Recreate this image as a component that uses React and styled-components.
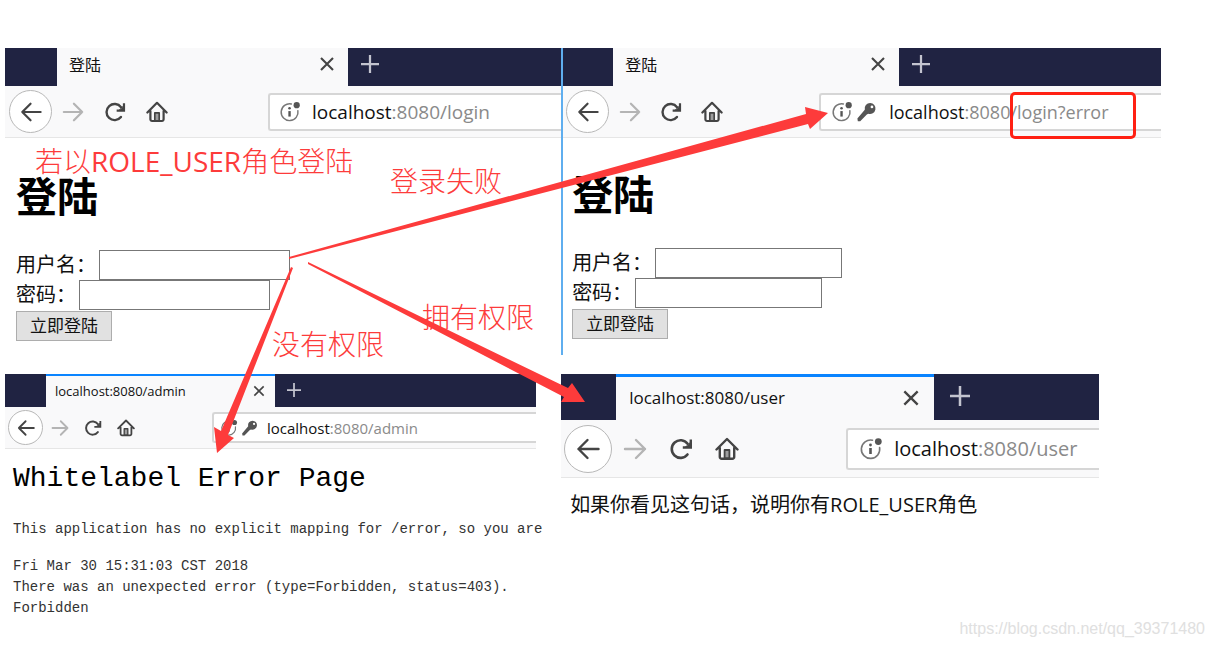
import React from 'react';
import styled, { createGlobalStyle, css } from 'styled-components';

const GlobalStyle = createGlobalStyle`
  * {
    box-sizing: border-box;
  }

  body {
    margin: 0;
    background: #fff;
    color: #111;
    font-family: "Open Sans", "Noto Sans CJK SC", sans-serif;
  }

  button, input {
    font-family: inherit;
    margin: 0;
  }
`;

// sizes for each browser window: s = small, m and n = normal, l = large
const sizes = {
  s: { bar: 33, block: 41, tab: 229, title: 13, pad: 9, lift: 1, tabIcon: 14, line: 2, nav: 42, inset: 3, back: 35, icon: 18, step: 33, space: 70, url: 31, font: 15, info: 18, urlPad: 6 },
  m: { bar: 38, block: 52, tab: 291, title: 16, pad: 12, lift: 7, tabIcon: 18, line: 0, nav: 52, inset: 4, back: 43, icon: 22, step: 42, space: 90, url: 38, font: 19, info: 22, urlPad: 9 },
  n: { bar: 38, block: 50, tab: 286, title: 16, pad: 12, lift: 6, tabIcon: 18, line: 0, nav: 52, inset: 3, back: 43, icon: 22, step: 41, space: 87, url: 38, font: 18, info: 22, urlPad: 10 },
  l: { bar: 46, block: 55, tab: 318, title: 17, pad: 13, lift: 2, tabIcon: 20, line: 3, nav: 58, inset: 3, back: 48, icon: 24, step: 46, space: 96, url: 42, font: 20, info: 24, urlPad: 11 },
};

const Page = styled.main`
  position: relative;
  min-height: 100vh;
  padding: 48px 0 0 5px;
  overflow: hidden;
`;

const Board = styled.div`
  display: grid;
  grid-template-columns: 46fr 54fr;
  grid-template-rows: 326px auto;
`;

const Cell = styled.div`
  min-width: 0;
  padding-right: ${({ $right }) => $right || 0}px;
`;

const Window = styled.section`
  ${({ $edge }) => $edge && css`
    height: 307px;
    border-left: 2px solid #5faeef;
  `}
`;

const TabBar = styled.div`
  display: flex;
  height: ${({ $s }) => $s.bar}px;
  padding-left: ${({ $s }) => $s.block}px;
  background: #202342;
`;

const Tab = styled.div`
  display: flex;
  align-items: center;
  justify-content: space-between;
  width: ${({ $s }) => $s.tab}px;
  padding: 0 ${({ $s }) => $s.pad}px ${({ $s }) => $s.lift}px;
  border-top: ${({ $s }) => $s.line}px solid #0a84ff;
  background: #f9f9fa;
  font-size: ${({ $s }) => $s.title}px;
  white-space: nowrap;
`;

const IconButton = styled.button`
  display: flex;
  align-items: center;
  justify-content: center;
  flex: none;
  padding: 0;
  border: none;
  background: none;
  color: ${({ $color }) => $color || '#444'};
`;

const NewTab = styled(IconButton)`
  width: ${({ $s }) => $s.bar + 5}px;
  padding-bottom: ${({ $s }) => $s.lift}px;
`;

const NavBar = styled.div`
  display: flex;
  align-items: center;
  height: ${({ $s }) => $s.nav}px;
  padding-left: ${({ $s }) => $s.inset}px;
  border-bottom: 1px solid #e6e6e6;
  background: #f9f9fa;
`;

const BackButton = styled(IconButton)`
  width: ${({ $s }) => $s.back}px;
  height: ${({ $s }) => $s.back}px;
  border: 1px solid #b8b8b8;
  border-radius: 50%;
  background: #fff;
`;

const ToolButton = styled(IconButton)`
  width: ${({ $s }) => $s.step}px;
`;

const AddressBar = styled.div`
  display: flex;
  align-items: center;
  flex: 1;
  gap: ${({ $s }) => ($s.font > 16 ? 11 : 8)}px;
  min-width: 0;
  height: ${({ $s }) => $s.url}px;
  margin-left: ${({ $s }) => $s.space}px;
  padding-left: ${({ $s }) => $s.urlPad}px;
  border: 2px solid #d6d6d6;
  border-right: none;
  border-radius: 3px 0 0 3px;
  background: #fff;
  color: #8a8a8a;
  font-size: ${({ $s }) => $s.font}px;
  white-space: nowrap;
`;

const Identity = styled.span`
  display: flex;
  align-items: center;
  gap: 3px;
  color: #555;
`;

const Host = styled.span`
  color: #111;
`;

const LoginBody = styled.div`
  padding: ${({ $top }) => $top}px 10px 0 ${({ $left }) => $left}px;
`;

const Heading = styled.h1`
  margin: 0 0 30px;
  font-size: 41px;
  line-height: 48px;
  font-weight: 700;
  color: #000;
`;

const Field = styled.div`
  display: flex;
  align-items: center;
  gap: 3px;
  height: 30px;
  font-size: 20px;
  line-height: 28px;
`;

const TextInput = styled.input`
  width: ${({ $width }) => $width}px;
  height: 30px;
  border: 1px solid #777;
  background: #fff;
`;

const SubmitButton = styled.button`
  height: 30px;
  margin-top: 1px;
  padding: 0 13px;
  border: 1px solid #adadad;
  background: #e1e1e1;
  color: #111;
  font-size: 17px;
  line-height: 28px;
`;

const ErrorBody = styled.div`
  padding: 10px 8px 0;
  color: #333;
  font-family: "Liberation Mono", monospace;
  font-size: 14px;
  line-height: 21px;
  white-space: nowrap;

  h1 {
    margin: 0 0 20px;
    color: #000;
    font-size: 28px;
    font-weight: 400;
    line-height: 40px;
  }

  p {
    margin: 0 0 16px;
  }
`;

const Message = styled.p`
  margin: 0;
  padding: 13px 9px;
  font-size: 20px;
  line-height: 28px;
`;

const Arrows = styled.svg`
  position: absolute;
  top: 0;
  left: 0;
  width: 100%;
  height: 647px;
  pointer-events: none;
`;

const Note = styled.span`
  position: absolute;
  top: ${({ $top }) => $top}px;
  left: ${({ $left }) => $left}px;
  color: #fd3b3b;
  font-size: 28px;
  font-weight: 300;
  line-height: 36px;
  white-space: nowrap;
`;

const Role = styled.span`
  font-weight: 400;
`;

const Highlight = styled.span`
  position: absolute;
  top: 92px;
  left: 1010px;
  width: 126px;
  height: 47px;
  border: 3px solid #ff2013;
  border-radius: 5px;
`;

const Watermark = styled.a`
  position: absolute;
  right: 9px;
  top: 619px;
  color: #e0e0e0;
  font-family: "Liberation Sans", sans-serif;
  font-size: 16px;
  line-height: 20px;
  text-decoration: none;
`;

const Svg = ({ size, children }) => (
  <svg width={size} height={size} viewBox="0 0 24 24" fill="none" stroke="currentColor" strokeWidth="2.4" strokeLinecap="round" strokeLinejoin="round" aria-hidden="true">
    {children}
  </svg>
);

const BackIcon = ({ size }) => (
  <Svg size={size}><path d="M11.5 3 2.5 12l9 9M2.5 12h20" /></Svg>
);

const ForwardIcon = ({ size }) => (
  <Svg size={size}><path d="m13 3 9 9-9 9M22 12H2" /></Svg>
);

const ReloadIcon = ({ size }) => (
  <Svg size={size}>
    <path d="M18.5 17.5A8.8 8.8 0 1 1 18.6 6.8" strokeWidth="2.6" />
    <path d="M21.8 2.5v8h-8" strokeLinecap="butt" strokeLinejoin="miter" />
    <path d="M21 6v4h-4z" fill="currentColor" strokeWidth="1" />
  </Svg>
);

const HomeIcon = ({ size }) => (
  <Svg size={size}>
    <path d="M1.5 12.5 12 2l10.500 10.500M4.800 11v9a1.800 1.800 0 0 0 1.800 1.800h10.800a1.800 1.800 0 0 0 1.800-1.800v-9" />
    <path d="M9.6 21.5V13h4.800v8.500z" fill="currentColor" fillOpacity="0.5" strokeWidth="1.8" />
  </Svg>
);

const CloseIcon = ({ size }) => (
  <Svg size={size}><path d="m4 4 16 16M20 4 4 20" strokeLinecap="butt" strokeWidth="2.8" /></Svg>
);

const PlusIcon = ({ size }) => (
  <Svg size={size}><path d="M12 0v24M0 12h24" strokeLinecap="butt" strokeWidth="3" /></Svg>
);

const InfoIcon = ({ size }) => (
  <Svg size={size}>
    <path d="M13.5 3.2A9.2 9.2 0 1 0 20.6 10.5" strokeWidth="1.6" stroke="#777" />
    <path d="M11.5 11v6" strokeWidth="2.6" strokeLinecap="butt" />
    <circle cx="11.5" cy="8" r="1.4" fill="currentColor" stroke="none" />
    <circle cx="19.3" cy="4.6" r="3.4" fill="currentColor" stroke="none" />
  </Svg>
);

const KeyIcon = ({ size }) => (
  <Svg size={size}>
    <path fill="currentColor" stroke="none" fillRule="evenodd" d="M15.5 2.2a6 6 0 0 0-5.9 7.4L1.5 19.200 2 22h2.600l7.200-7.200 1.600-.9A6 6 0 1 0 15.500 2.200zM17.400 5a1.500 1.500 0 1 1 0 3 1.500 1.500 0 0 1 0-3z" />
  </Svg>
);

const Browser = ({ size, title, path, savedKey, edge, children }) => {
  const s = sizes[size];
  return (
    <Window $edge={edge}>
      <TabBar $s={s}>
        <Tab $s={s}>
          <span>{title}</span>
          <IconButton aria-label="关闭标签页"><CloseIcon size={s.tabIcon} /></IconButton>
        </Tab>
        <NewTab $s={s} $color="#c3c4cf" aria-label="新标签页"><PlusIcon size={s.tabIcon} /></NewTab>
      </TabBar>
      <NavBar $s={s}>
        <BackButton $s={s} aria-label="后退"><BackIcon size={s.icon} /></BackButton>
        <ToolButton $s={s} $color="#b4b4b4" aria-label="前进"><ForwardIcon size={s.icon} /></ToolButton>
        <ToolButton $s={s} aria-label="刷新"><ReloadIcon size={s.icon} /></ToolButton>
        <ToolButton $s={s} aria-label="主页"><HomeIcon size={s.icon} /></ToolButton>
        <AddressBar $s={s}>
          <Identity>
            <InfoIcon size={s.info} />
            {savedKey && <KeyIcon size={s.info} />}
          </Identity>
          <span><Host>localhost</Host>:8080{path}</span>
        </AddressBar>
      </NavBar>
      {children}
    </Window>
  );
};

const LoginForm = ({ id, top, left, inputWidth }) => (
  <LoginBody $top={top} $left={left}>
    <Heading>登陆</Heading>
    <form onSubmit={(e) => e.preventDefault()}>
      <Field>
        <label htmlFor={`${id}-user`}>用户名：</label>
        <TextInput id={`${id}-user`} type="text" $width={inputWidth} />
      </Field>
      <Field>
        <label htmlFor={`${id}-pass`}>密码：</label>
        <TextInput id={`${id}-pass`} type="password" $width={inputWidth} />
      </Field>
      <SubmitButton type="submit">立即登陆</SubmitButton>
    </form>
  </LoginBody>
);

const notes = [
  { id: 'role', text: <>若以<Role>ROLE_USER</Role>角色登陆</>, left: 35, top: 143 },
  { id: 'failed', text: '登录失败', left: 390, top: 163 },
  { id: 'denied', text: '没有权限', left: 272, top: 326 },
  { id: 'allowed', text: '拥有权限', left: 422, top: 299 },
];

const App = () => (
  <Page>
    <GlobalStyle />
    <Board>
      <Cell>
        <Browser size="m" title="登陆" path="/login">
          <LoginForm id="login" top={34} left={11} inputWidth={191} />
        </Browser>
      </Cell>
      <Cell $right={53}>
        <Browser size="n" title="登陆" path="/login?error" savedKey edge>
          <LoginForm id="failed" top={32} left={9} inputWidth={187} />
        </Browser>
      </Cell>
      <Cell $right={25}>
        <Browser size="s" title="localhost:8080/admin" path="/admin" savedKey>
          <ErrorBody>
            <h1>Whitelabel Error Page</h1>
            <p>This application has no explicit mapping for /error, so you are</p>
            <div>Fri Mar 30 15:31:03 CST 2018</div>
            <div>There was an unexpected error (type=Forbidden, status=403).</div>
            <div>Forbidden</div>
          </ErrorBody>
        </Browser>
      </Cell>
      <Cell $right={115}>
        <Browser size="l" title="localhost:8080/user" path="/user">
          <Message>如果你看见这句话，说明你有ROLE_USER角色</Message>
        </Browser>
      </Cell>
    </Board>
    {notes.map((note) => (
      <Note key={note.id} $left={note.left} $top={note.top}>{note.text}</Note>
    ))}
    <Highlight />
    <Arrows viewBox="0 0 1214 647" preserveAspectRatio="none" fill="#fd3b3b" aria-hidden="true">
      <path d="M289 257 806 114 805 107 828 113 810 129 808 124 289 259z" />
      <path d="M291 267 221 431 214 427 217 453 234 438 228 435 293 268z" />
      <path d="M308 262 568 388 572 383 585 402 561 402 564 397 308 264z" />
    </Arrows>
    <Watermark href="https://blog.csdn.net/qq_39371480">https://blog.csdn.net/qq_39371480</Watermark>
  </Page>
);

export default App;
